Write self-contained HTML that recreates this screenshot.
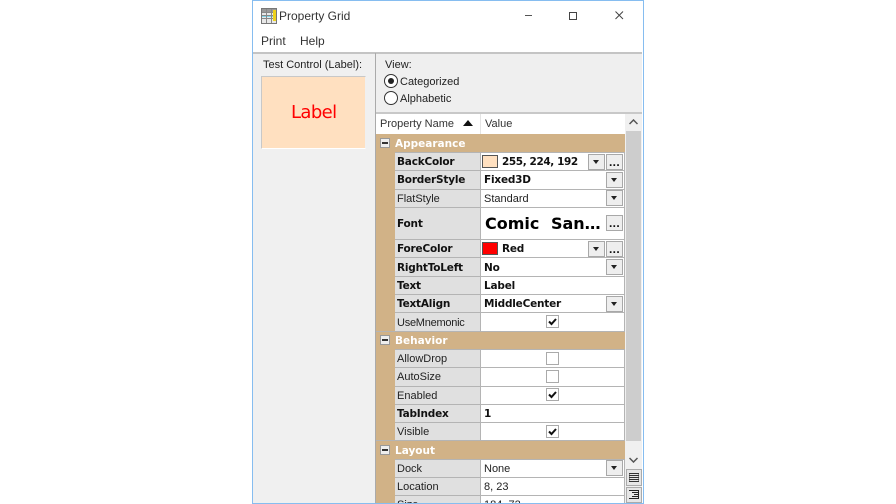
<!DOCTYPE html>
<html><head><meta charset="utf-8"><style>
html,body{margin:0;padding:0;background:#fff;width:896px;height:504px;overflow:hidden}
body{position:relative;font-family:"Liberation Sans",sans-serif;font-size:11px;color:#222}
div,span{position:absolute;white-space:nowrap;box-sizing:border-box}
.t{line-height:14px;height:14px;margin-top:1px}
.b{font-family:"DejaVu Sans",sans-serif;font-weight:bold;font-size:10.5px;color:#111;letter-spacing:-.2px}
.n{left:397px}
.v{left:484px}
.hl{left:376px;width:249px;height:1px;background:#b4b4b4}
.nm{left:395px;width:85px;background:#e0e0e0}
.cat{left:376px;width:249px;background:#d1b287}
.cb{left:380px;width:10px;height:10px;background:#eee;border:1px solid #999}
.cb:after{content:"";position:absolute;left:1px;top:3px;width:6px;height:2px;background:#333}
.ct{left:395px;margin-top:1px;color:#fff;font-family:"DejaVu Sans",sans-serif;font-weight:bold;font-size:10.5px;line-height:14px}
.btn{width:17px;height:16px;background:#eee;border:1px solid #a8a8a8}
.btn:after{content:"";position:absolute;left:4px;top:5px;border-left:3.5px solid transparent;border-right:3.5px solid transparent;border-top:4px solid #222}
.dot{width:17px;height:16px;background:#eee;border:1px solid #a8a8a8;color:#111;font-weight:bold;font-size:12px;line-height:15px;text-align:center;letter-spacing:.3px}
.chk{left:546px;width:13px;height:13px;background:#fff;border:1px solid #aaa}
</style></head><body>
<!-- window -->
<div style="left:252px;top:0;width:392px;height:504px;background:#fff;border:1px solid #86bdf0"></div>
<svg style="position:absolute;left:261px;top:8px" width="17" height="16" viewBox="0 0 17 16"><rect x=".5" y=".5" width="15" height="15" fill="#e8e8e8" stroke="#777"/><rect x="1" y="1" width="14" height="3" fill="#999"/><rect x="1" y="7" width="14" height="2" fill="#7fd4e8"/><path d="M5.500 1V15M10.500 1V15M1 4.500H15M1 7.500H15M1 10.500H15" stroke="#888" fill="none"/><rect x="12" y="2" width="3" height="11" fill="#eed21c"/></svg>
<div class="t" style="left:279px;top:9px;margin-top:0;font-size:12px;color:#333">Property Grid</div>
<div style="left:525px;top:15px;width:7px;height:1px;background:#555"></div>
<div style="left:569px;top:12px;width:8px;height:8px;border:1px solid #444"></div>
<svg style="position:absolute;left:615px;top:11px" width="9" height="9"><path d="M.5 .5L8 8M8 .5L.5 8" stroke="#444" fill="none"/></svg>
<div class="t" style="left:261px;top:34px;margin-top:0;font-size:12px;color:#333">Print</div>
<div class="t" style="left:300px;top:34px;margin-top:0;font-size:12px;color:#333">Help</div>
<div style="left:253px;top:52px;width:389px;height:2px;background:#c4c4c4"></div>
<!-- left panel -->
<div style="left:253px;top:54px;width:122px;height:449px;background:#f0f0f0"></div>
<div style="left:375px;top:53px;width:1px;height:450px;background:#aaa"></div>
<div class="t" style="left:263px;top:57px;color:#222">Test Control (Label):</div>
<div style="left:261px;top:76px;width:105px;height:73px;background:#ffe0c0;border:1px solid #c8c8c8;border-right-color:#f0f0f0;border-bottom-color:#fff"></div>
<div style="left:291px;top:102px;font-size:18px;line-height:22px;color:#f00;font-family:'DejaVu Sans',sans-serif;letter-spacing:-.6px">Label</div>
<!-- view -->
<div style="left:376px;top:54px;width:266px;height:59px;background:#efefef"></div>
<div style="left:376px;top:112px;width:266px;height:2px;background:#c8c8c8"></div>
<div class="t" style="left:385px;top:57px">View:</div>
<div style="left:384px;top:74px;width:14px;height:14px;border-radius:50%;background:#fff;border:1px solid #333"></div>
<div style="left:388px;top:78px;width:6px;height:6px;border-radius:50%;background:#222"></div>
<div class="t" style="left:400px;top:74px">Categorized</div>
<div style="left:384px;top:91px;width:14px;height:14px;border-radius:50%;background:#fff;border:1px solid #333"></div>
<div class="t" style="left:400px;top:91px">Alphabetic</div>
<!-- header -->
<div style="left:376px;top:114px;width:250px;height:20px;background:#fff"></div>
<div style="left:480px;top:114px;width:1px;height:20px;background:#e4e4e4"></div>
<div class="t" style="left:380px;top:116px;color:#333">Property Name</div>
<div style="left:463px;top:120px;border-left:5px solid transparent;border-right:5px solid transparent;border-bottom:6px solid #111"></div>
<div class="t" style="left:485px;top:116px;color:#333">Value</div>
<!-- grid bg -->
<div style="left:376px;top:134px;width:19px;height:369px;background:#d1b287"></div>
<div class="nm" style="top:153px;height:350px"></div>
<div style="left:480px;top:153px;width:145px;height:350px;background:#fff"></div>
<div style="left:480px;top:153px;width:1px;height:350px;background:#b4b4b4"></div>
<div style="left:624px;top:134px;width:1px;height:369px;background:#b4b4b4"></div>
<!-- categories -->
<div class="cat" style="top:134px;height:18px"></div><div class="cb" style="top:138px"></div><div class="ct" style="top:136px">Appearance</div>
<div class="cat" style="top:331px;height:18px"></div><div class="cb" style="top:335px"></div><div class="ct" style="top:333px">Behavior</div>
<div class="cat" style="top:441px;height:18px"></div><div class="cb" style="top:445px"></div><div class="ct" style="top:443px">Layout</div>
<!-- lines -->
<div class="hl" style="left:395px;width:230px;top:152px"></div>
<div class="hl" style="left:395px;width:230px;top:170px"></div>
<div class="hl" style="left:395px;width:230px;top:189px"></div>
<div class="hl" style="left:395px;width:230px;top:207px"></div>
<div class="hl" style="left:395px;width:230px;top:239px"></div>
<div class="hl" style="left:395px;width:230px;top:257px"></div>
<div class="hl" style="left:395px;width:230px;top:276px"></div>
<div class="hl" style="left:395px;width:230px;top:294px"></div>
<div class="hl" style="left:395px;width:230px;top:312px"></div>
<div class="hl" style="top:331px"></div>
<div class="hl" style="left:395px;width:230px;top:349px"></div>
<div class="hl" style="left:395px;width:230px;top:367px"></div>
<div class="hl" style="left:395px;width:230px;top:386px"></div>
<div class="hl" style="left:395px;width:230px;top:404px"></div>
<div class="hl" style="left:395px;width:230px;top:422px"></div>
<div class="hl" style="top:440px"></div>
<div class="hl" style="left:395px;width:230px;top:459px"></div>
<div class="hl" style="left:395px;width:230px;top:477px"></div>
<div class="hl" style="left:395px;width:230px;top:495px"></div>
<!-- names -->
<div class="t b n" style="top:154px">BackColor</div>
<div class="t b n" style="top:172px">BorderStyle</div>
<div class="t n" style="top:191px">FlatStyle</div>
<div class="t b n" style="top:216px">Font</div>
<div class="t b n" style="top:241px">ForeColor</div>
<div class="t b n" style="top:260px">RightToLeft</div>
<div class="t b n" style="top:278px">Text</div>
<div class="t b n" style="top:296px">TextAlign</div>
<div class="t n" style="top:315px;letter-spacing:-.25px">UseMnemonic</div>
<div class="t n" style="top:351px">AllowDrop</div>
<div class="t n" style="top:369px">AutoSize</div>
<div class="t n" style="top:388px">Enabled</div>
<div class="t b n" style="top:406px">TabIndex</div>
<div class="t n" style="top:424px">Visible</div>
<div class="t n" style="top:461px">Dock</div>
<div class="t n" style="top:479px">Location</div>
<div class="t n" style="top:497px;height:7px;overflow:hidden">Size</div>
<!-- values -->
<div style="left:482px;top:155px;width:16px;height:13px;background:#ffe0c0;border:1px solid #555"></div>
<div class="t b" style="left:502px;top:154px;letter-spacing:-.4px">255, 224, 192</div>
<div class="btn" style="left:588px;top:154px"></div><div class="dot" style="left:606px;top:154px">...</div>
<div class="t b v" style="top:172px">Fixed3D</div>
<div class="btn" style="left:606px;top:172px"></div>
<div class="t v" style="top:191px">Standard</div>
<div class="btn" style="left:606px;top:190px"></div>
<div style="left:485px;top:212px;font-family:'DejaVu Sans',sans-serif;font-weight:bold;font-size:16px;line-height:24px;color:#000;word-spacing:6px">Comic San…</div>
<div class="dot" style="left:606px;top:215px">...</div>
<div style="left:482px;top:242px;width:16px;height:13px;background:#f00;border:1px solid #555"></div>
<div class="t b" style="left:502px;top:241px">Red</div>
<div class="btn" style="left:588px;top:241px"></div><div class="dot" style="left:606px;top:241px">...</div>
<div class="t b v" style="top:260px">No</div>
<div class="btn" style="left:606px;top:259px"></div>
<div class="t b v" style="top:278px">Label</div>
<div class="t b v" style="top:296px">MiddleCenter</div>
<div class="btn" style="left:606px;top:296px"></div>
<div class="chk" style="top:315px"></div>
<div class="chk" style="top:352px"></div>
<div class="chk" style="top:370px"></div>
<div class="chk" style="top:388px"></div>
<div class="t b v" style="top:406px">1</div>
<div class="chk" style="top:425px"></div>
<svg style="position:absolute;left:546px;top:315px" width="13" height="125"><g fill="none" stroke="#111" stroke-width="2"><path d="M3 6.500L5.500 9L10 4"/><path d="M3 79.500L5.500 82L10 77"/><path d="M3 116.500L5.500 119L10 114"/></g></svg>
<div class="t v" style="top:461px">None</div>
<div class="btn" style="left:606px;top:460px"></div>
<div class="t v" style="top:479px">8, 23</div>
<div class="t v" style="top:497px;height:7px;overflow:hidden">184, 72</div>
<!-- scrollbar -->
<div style="left:625px;top:114px;width:17px;height:389px;background:#f0f0f0"></div>
<div style="left:626px;top:131px;width:15px;height:310px;background:#cdcdcd"></div>
<svg style="position:absolute;left:629px;top:119px" width="9" height="6"><path d="M.5 5L4.500 1L8.500 5" stroke="#555" stroke-width="1.500" fill="none"/></svg>
<svg style="position:absolute;left:629px;top:457px" width="9" height="6"><path d="M.5 1L4.500 5L8.500 1" stroke="#555" stroke-width="1.500" fill="none"/></svg>
<div style="left:626px;top:469px;width:16px;height:17px;background:#e6e6e6;border:1px solid #aaa"></div>
<svg style="position:absolute;left:629px;top:473px" width="10" height="9"><path d="M0 .5H10V8.500H0ZM0 2.500H10M0 4.500H10M0 6.500H10" stroke="#333" fill="none"/></svg>
<div style="left:626px;top:487px;width:16px;height:16px;background:#e6e6e6;border:1px solid #aaa"></div>
<svg style="position:absolute;left:629px;top:490px" width="10" height="10"><path d="M0 .5H10M3 2.500H10M5 4.500H10M3 6.500H10M0 8.500H10M9.500 0V9" stroke="#222" fill="none"/></svg>
<div style="left:252px;top:503px;width:392px;height:1px;background:#86bdf0"></div>
</body></html>
